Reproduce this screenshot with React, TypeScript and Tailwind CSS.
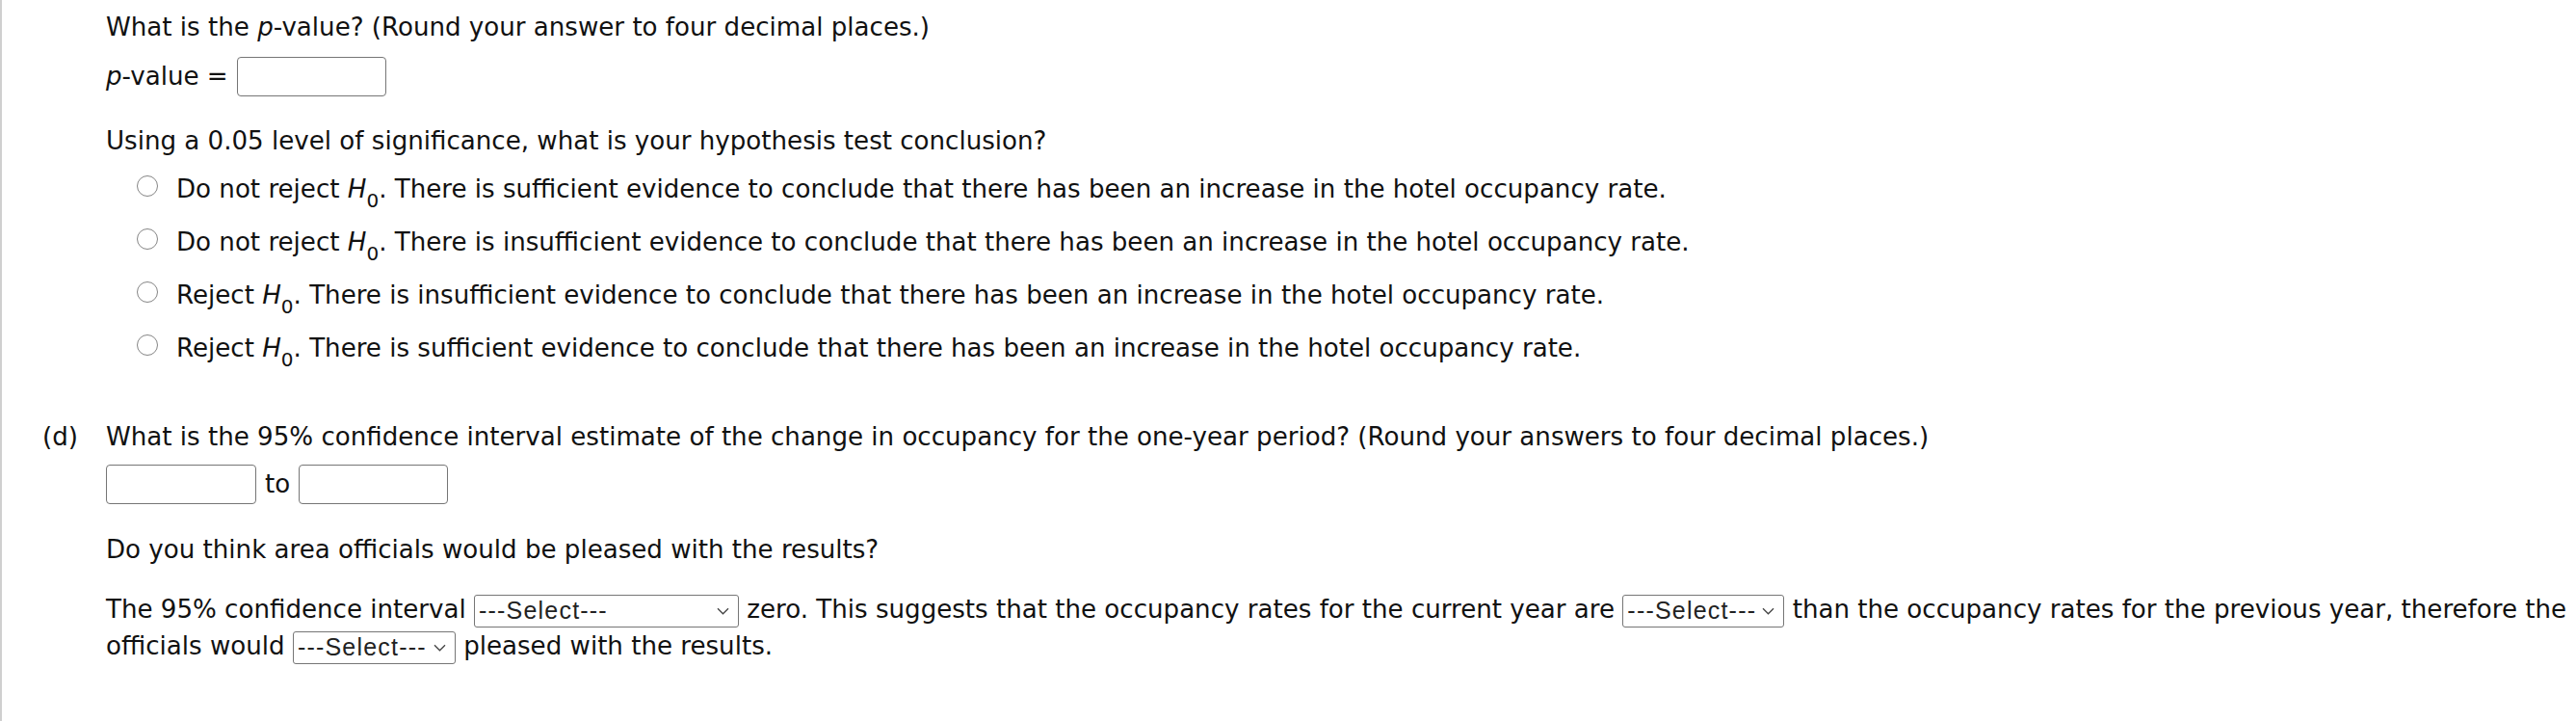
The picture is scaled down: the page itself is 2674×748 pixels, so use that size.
import React from "react";

const OPTIONS = [
  "Do not reject|There is sufficient evidence to conclude that there has been an increase in the hotel occupancy rate.",
  "Do not reject|There is insufficient evidence to conclude that there has been an increase in the hotel occupancy rate.",
  "Reject|There is insufficient evidence to conclude that there has been an increase in the hotel occupancy rate.",
  "Reject|There is sufficient evidence to conclude that there has been an increase in the hotel occupancy rate.",
];

function H0() {
  return (
    <>
      <i>H</i>
      <span className="relative top-[10px] text-[20px] leading-none">0</span>
    </>
  );
}

function Box({ w = "w-[155px]" }: { w?: string }) {
  return <span className={`inline-block h-[41px] ${w} rounded-[4px] border border-[#767676] bg-white`} />;
}

function FakeSelect({ w }: { w: string }) {
  return (
    <span
      className={`inline-flex h-[34px] ${w} items-center justify-between rounded-[3px] border border-[#767676] bg-white pl-[4px] pr-[9px] align-middle font-['Liberation_Sans',Arial,sans-serif] text-[25px] leading-none tracking-[1.2px] text-[#222]`}
    >
      <span>---Select---</span>
      <svg width="13" height="8" viewBox="0 0 13 8" className="shrink-0">
        <path d="M1 1.2 L6.5 6.8 L12 1.2" fill="none" stroke="#444" strokeWidth="1.3" />
      </svg>
    </span>
  );
}

export default function App() {
  return (
    <div className="min-h-[748px] border-l-2 border-[#cfcfcf] bg-white font-['DejaVu_Sans',Verdana,sans-serif] text-[26.1px] leading-[27px] text-[#111]">
      {/* end of part (c) */}
      <div className="pl-[108px] pt-[15px]">
        <p>
          What is the <i>p</i>-value? (Round your answer to four decimal places.)
        </p>
        <div className="mt-[17px] flex h-[41px] items-center gap-[9px]">
          <span>
            <i>p</i>-value =
          </span>
          <Box />
        </div>

        <p className="mt-[33px]">Using a 0.05 level of significance, what is your hypothesis test conclusion?</p>
        <div className="mt-[23px] flex flex-col gap-[28px] pl-[32px]">
          {OPTIONS.map((o) => {
            const [lead, rest] = o.split("|");
            return (
              <label key={o} className="flex items-start gap-[19px]">
                <span className="mt-[-1px] h-[22px] w-[22px] shrink-0 rounded-full border-[1.5px] border-[#858585] bg-white" />
                <span className="whitespace-nowrap">
                  {lead} <H0 />. {rest}
                </span>
              </label>
            );
          })}
        </div>
      </div>

      {/* part (d) */}
      <div className="mt-[65px] flex">
        <span className="w-[108px] shrink-0 pl-[42px]">(d)</span>
        <div className="min-w-0 flex-1">
          <p>
            What is the 95% confidence interval estimate of the change in occupancy for the one-year period? (Round your
            answers to four decimal places.)
          </p>
          <div className="mt-[15px] flex h-[41px] items-center gap-[9px]">
            <Box w="w-[156px]" />
            <span>to</span>
            <Box />
          </div>

          <p className="mt-[34px]">Do you think area officials would be pleased with the results?</p>

          <p className="mt-[29px] leading-[38px]">
            <span>The 95% confidence interval</span> <FakeSelect w="w-[275px]" />{" "}
            <span>zero. This suggests that the occupancy rates for the current year are</span>{" "}
            <FakeSelect w="w-[168px]" />{" "}
            <span>than the occupancy rates for the previous year, therefore the</span>{" "}
            <span>officials would</span> <FakeSelect w="w-[169px]" /> <span>pleased with the results.</span>
          </p>
        </div>
      </div>
    </div>
  );
}
